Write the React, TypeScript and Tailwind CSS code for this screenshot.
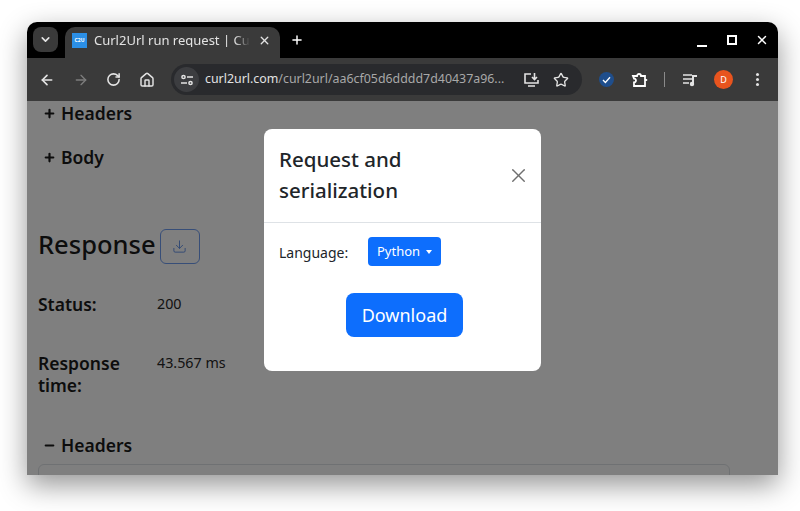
import { ArrowLeft, ArrowRight, ChevronDown, Download, Home, Minus, Plus, RotateCw, Star, X } from "lucide-react";

const font = { fontFamily: '"Noto Sans", "Open Sans", sans-serif' };

const TabStrip = () => (
  <div className="h-[36px] bg-black flex items-start pl-[6px] text-[#e3e3e3]">
    <div className="mt-[5px] w-[25px] h-[25px] rounded-lg bg-[#3a3a3a] flex items-center justify-center">
      <ChevronDown size={13} strokeWidth={3} />
    </div>
    {/* Active tab */}
    <div className="ml-[7px] mt-[5px] w-[215px] h-[31px] bg-[#3a3a3a] rounded-t-[10px] flex items-center pl-[7px] pb-[5px]">
      <div className="w-[15px] h-[15px] bg-[#2b8fe6] flex items-center justify-center text-[5px] font-bold text-white leading-none">
        C2U
      </div>
      <span className="ml-[7px] whitespace-nowrap text-[13px] leading-none [mask-image:linear-gradient(to_right,black_90%,transparent)]">
        Curl2Url run request | Cu
      </span>
      <X size={13} strokeWidth={2.5} className="ml-auto mr-[9px] shrink-0" />
    </div>
    <Plus size={14} strokeWidth={2.5} className="ml-[10px] mt-[11px] text-white" />
    <div className="ml-auto mr-[9px] mt-[11px] flex items-center text-white">
      <div className="w-[10px] h-[14px] flex items-end"><div className="w-[10px] h-[2px] bg-white" /></div>
      <div className="ml-[20px] w-[10px] h-[10px] border-2 border-white" />
      <X size={14} strokeWidth={2.5} className="ml-[18px]" />
    </div>
  </div>
);

const Toolbar = () => (
  <div className="h-[43px] bg-[#3a3a3a] flex items-center pl-[12px] text-[#e3e3e3]">
    <ArrowLeft size={16} strokeWidth={2.5} />
    <ArrowRight size={16} strokeWidth={2} className="ml-[18px] text-[#7d7d7d]" />
    <RotateCw size={15} strokeWidth={2.5} className="ml-[17px]" />
    <Home size={16} strokeWidth={2.2} className="ml-[18px]" />
    {/* Address bar */}
    <div className="ml-[16px] w-[411px] h-[31px] rounded-full bg-[#292a2d] flex items-center pl-[3px] pr-[13px]">
      <div className="w-[25px] h-[25px] rounded-full bg-[#3c3d40] flex items-center justify-center">
        <svg width="14" height="12" viewBox="0 0 14 12" fill="none" stroke="#e3e3e3" strokeWidth="1.5">
          <circle cx="3.5" cy="3" r="1.6" />
          <path d="M7 3h6M1 9h6" />
          <circle cx="10.5" cy="9" r="1.6" />
        </svg>
      </div>
      <span className="ml-[6px] whitespace-nowrap text-[12.4px] leading-none">
        curl2url.com<span className="text-[#a8a8a8]">/curl2url/aa6cf05d6dddd7d40437a96...</span>
      </span>
      <svg width="17" height="16" viewBox="0 0 17 16" fill="none" stroke="#e3e3e3" strokeWidth="1.6" className="ml-auto">
        <path d="M8 2H2v9h13V8M5 14h7M11.5 1v6M9 5l2.5 2.5L14 5" />
      </svg>
      <Star size={16} strokeWidth={2} className="ml-[13px]" />
    </div>
    <div className="ml-[17px] w-[15px] h-[15px] rounded-full bg-[#1f4e8c] flex items-center justify-center">
      <svg width="9" height="8" viewBox="0 0 9 8" fill="none" stroke="#ffffff" strokeWidth="1.3">
        <path d="M1 4l2.4 2.5L8 1.2" />
      </svg>
    </div>
    <svg width="18" height="18" viewBox="0 0 18 18" fill="none" stroke="#ffffff" strokeWidth="1.8" className="ml-[17px]">
      <path d="M2 5h4a2 2 0 0 1 4 0h4v3.5l2 .5-2 .5V15H3v-3.5a2 2 0 0 0 0-4z" />
    </svg>
    <div className="ml-[15px] w-px h-[15px] bg-[#8a8a8a]" />
    <svg width="16" height="14" viewBox="0 0 16 14" fill="none" stroke="#e3e3e3" strokeWidth="1.6" className="ml-[17px]">
      <path d="M1 2h9M1 6h9M1 10h6" />
      <path d="M11 11V3h4" strokeWidth="2" />
      <circle cx="10" cy="11" r="1.4" fill="#e3e3e3" />
    </svg>
    <div className="ml-[16px] w-[19px] h-[19px] rounded-full bg-[#e8541e] flex items-center justify-center text-[9px] text-white">
      D
    </div>
    <div className="ml-[23px] flex flex-col gap-[2px]">
      <div className="w-[3px] h-[3px] rounded-full bg-[#e3e3e3]" />
      <div className="w-[3px] h-[3px] rounded-full bg-[#e3e3e3]" />
      <div className="w-[3px] h-[3px] rounded-full bg-[#e3e3e3]" />
    </div>
  </div>
);

const Section = ({ open, label, className }: { open?: boolean; label: string; className: string }) => (
  <div className={`flex items-center gap-[5px] text-[17.5px] leading-[24px] font-semibold text-[#1a1a1a] ${className}`}>
    {open ? <Minus size={13} strokeWidth={4} /> : <Plus size={13} strokeWidth={4} />}
    {label}
  </div>
);

const PageContent = () => (
  <div className="pl-[11px] pr-[48px] text-[#1a1a1a]">
    <Section label="Headers" className="ml-[5px]" />
    <Section label="Body" className="ml-[5px] mt-[20px]" />
    <div className="mt-[59px] flex items-center h-[36px]">
      <h2 className="pb-[2px] text-[25.5px] font-medium leading-none">Response</h2>
      <div className="ml-[4px] w-[40px] h-[35px] rounded-md border-[1.5px] border-[#6f9cf0] flex items-center justify-center text-[#5f8fe8]">
        <Download size={15} strokeWidth={1.5} />
      </div>
    </div>
    <div className="mt-[29px] flex items-center">
      <span className="w-[119px] text-[17.5px] leading-[22px] font-semibold">Status:</span>
      <span className="text-[14.3px] leading-[22px] text-[#262626]">200</span>
    </div>
    <div className="mt-[37px] flex items-start">
      <span className="w-[119px] text-[17.5px] leading-[22px] font-semibold">
        Response
        <br />
        time:
      </span>
      <span className="text-[14.3px] leading-[22px] text-[#262626]">43.567 ms</span>
    </div>
    <Section open label="Headers" className="ml-[5px] mt-[37px]" />
    <div className="mt-[7px] h-[40px] rounded-md border border-[#dee2e6]" />
  </div>
);

const Modal = () => (
  <div className="absolute left-[237px] top-[107px] w-[277px] h-[242px] bg-white rounded-lg text-[#212529]">
    <div className="h-[94px] border-b border-[#dee2e6] flex items-center pl-[15px] pr-[11px]">
      <h3 className="pb-[2px] text-[20.5px] leading-[31px] font-medium">
        Request and
        <br />
        serialization
      </h3>
      <X size={23} strokeWidth={1.5} className="ml-auto text-[#6f6f6f]" />
    </div>
    <div className="mt-[14px] flex items-center pl-[15px]">
      <span className="w-[89px] pt-[1px] text-[14px] leading-[21px]">Language:</span>
      <div className="w-[73px] h-[29px] rounded bg-[#0d6efd] text-white text-[13px] flex items-center justify-center gap-[6px]">
        Python
        <div className="w-0 h-0 border-x-[3.5px] border-x-transparent border-t-[4px] border-t-white" />
      </div>
    </div>
    <div className="mt-[27px] flex justify-center pl-[4px]">
      <div className="w-[117px] h-[44px] rounded-lg bg-[#0d6efd] text-white text-[18px] flex items-center justify-center">
        Download
      </div>
    </div>
  </div>
);

export default function App() {
  return (
    <div className="w-[800px] h-[511px] bg-white overflow-hidden pt-[22px] pl-[27px]" style={font}>
      <div className="relative w-[751px] h-[453px] rounded-t-[10px] overflow-hidden shadow-[0_10px_28px_rgba(0,0,0,0.42)] bg-white">
        <TabStrip />
        <Toolbar />
        <div className="relative h-[374px] overflow-hidden">
          <PageContent />
          {/* Backdrop */}
          <div className="absolute inset-0 bg-black/50" />
        </div>
        <Modal />
      </div>
    </div>
  );
}
